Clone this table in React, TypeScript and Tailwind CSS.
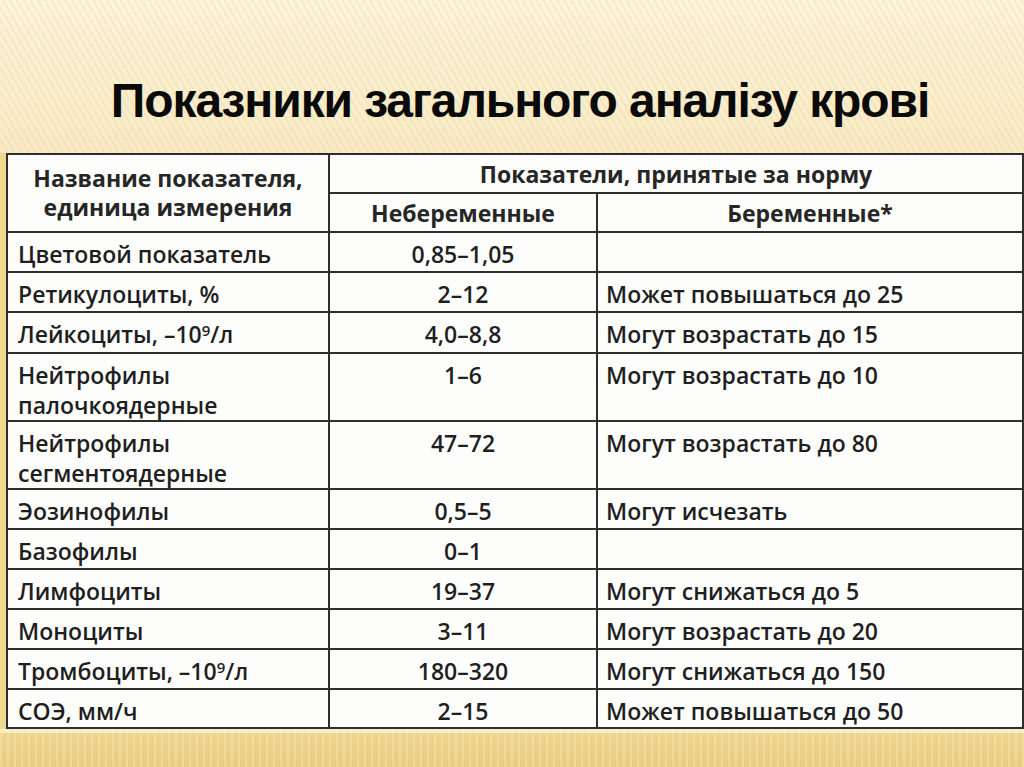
import React from "react";

type Row = {
  name: React.ReactNode;
  norm: string;
  preg: string;
  h: string;
};

const Sup = () => <sup className="top-[-0.45em] text-[15px]">9</sup>;

const rows: Row[] = [
  { name: "Цветовой показатель", norm: "0,85–1,05", preg: "", h: "h-[40px]" },
  { name: "Ретикулоциты, %", norm: "2–12", preg: "Может повышаться до 25", h: "h-[40px]" },
  {
    name: (
      <>
        Лейкоциты, –10<Sup />/л
      </>
    ),
    norm: "4,0–8,8",
    preg: "Могут возрастать до 15",
    h: "h-[41px]",
  },
  {
    name: (
      <>
        Нейтрофилы
        <br />
        палочкоядерные
      </>
    ),
    norm: "1–6",
    preg: "Могут возрастать до 10",
    h: "h-[67px]",
  },
  {
    name: (
      <>
        Нейтрофилы
        <br />
        сегментоядерные
      </>
    ),
    norm: "47–72",
    preg: "Могут возрастать до 80",
    h: "h-[68px]",
  },
  { name: "Эозинофилы", norm: "0,5–5", preg: "Могут исчезать", h: "h-[40px]" },
  { name: "Базофилы", norm: "0–1", preg: "", h: "h-[40px]" },
  { name: "Лимфоциты", norm: "19–37", preg: "Могут снижаться до 5", h: "h-[40px]" },
  { name: "Моноциты", norm: "3–11", preg: "Могут возрастать до 20", h: "h-[40px]" },
  {
    name: (
      <>
        Тромбоциты, –10<Sup />/л
      </>
    ),
    norm: "180–320",
    preg: "Могут снижаться до 150",
    h: "h-[40px]",
  },
  { name: "СОЭ, мм/ч", norm: "2–15", preg: "Может повышаться до 50", h: "h-[39px]" },
];

export default function App() {
  return (
    <div className="flex h-[767px] w-[1024px] flex-col overflow-hidden bg-[#f9edc9] font-['Open_Sans',sans-serif]">
      {/* Title band */}
      <div className="flex h-[153px] shrink-0 items-center justify-center bg-[image:repeating-linear-gradient(60deg,rgba(214,190,130,0.18)_0px,rgba(214,190,130,0.18)_2px,transparent_2px,transparent_6px),linear-gradient(180deg,#fcf4dc_0%,#fbf1d4_25%,#f8eac4_100%)] pt-[48px] pl-[16px]">
        <h1 className="font-['Liberation_Sans',Arial,sans-serif] text-[48px] font-bold tracking-[-1.1px] text-[#0a0a0a]">
          Показники загального аналізу крові
        </h1>
      </div>

      {/* Table */}
      <div className="flex shrink-0">
        <div className="w-[6px] shrink-0 bg-[#efd993]" />
        <table className="w-[1016px] table-fixed border-collapse bg-[#fdfdfb] text-[23px] font-semibold leading-[30px] text-[#1f1f1f]">
          <colgroup>
            <col className="w-[322px]" />
            <col className="w-[268px]" />
            <col className="w-[426px]" />
          </colgroup>
          <thead>
            <tr className="h-[39px]">
              <th
                rowSpan={2}
                className="border-2 border-[#2e2e2e] px-2 text-center align-middle text-[23px] font-bold leading-[29px] text-[#262626]"
              >
                Название показателя,
                <br />
                единица измерения
              </th>
              <th
                colSpan={2}
                className="border-2 border-[#2e2e2e] text-center align-middle font-bold text-[#262626]"
              >
                Показатели, принятые за норму
              </th>
            </tr>
            <tr className="h-[39px]">
              <th className="border-2 border-[#2e2e2e] text-center align-middle font-bold text-[#262626]">
                Небеременные
              </th>
              <th className="border-2 border-[#2e2e2e] text-center align-middle font-bold text-[#262626]">
                Беременные*
              </th>
            </tr>
          </thead>
          <tbody>
            {rows.map((r, i) => (
              <tr key={i} className={r.h}>
                <td className="border-2 border-[#2e2e2e] pl-[10px] pt-[6px] align-top">{r.name}</td>
                <td className="border-2 border-[#2e2e2e] pt-[6px] text-center align-top">{r.norm}</td>
                <td className="border-2 border-[#2e2e2e] pl-[8px] pt-[6px] align-top">{r.preg}</td>
              </tr>
            ))}
          </tbody>
        </table>
        <div className="flex-1 bg-[#f3e3b4]" />
      </div>

      {/* Bottom band */}
      <div className="mt-[4px] flex-1 bg-[image:repeating-linear-gradient(90deg,rgba(255,240,190,0.35)_0px,rgba(255,240,190,0.35)_2px,transparent_2px,transparent_7px),linear-gradient(180deg,#edd38c_0%,#e8cc82_100%)]" />
    </div>
  );
}
